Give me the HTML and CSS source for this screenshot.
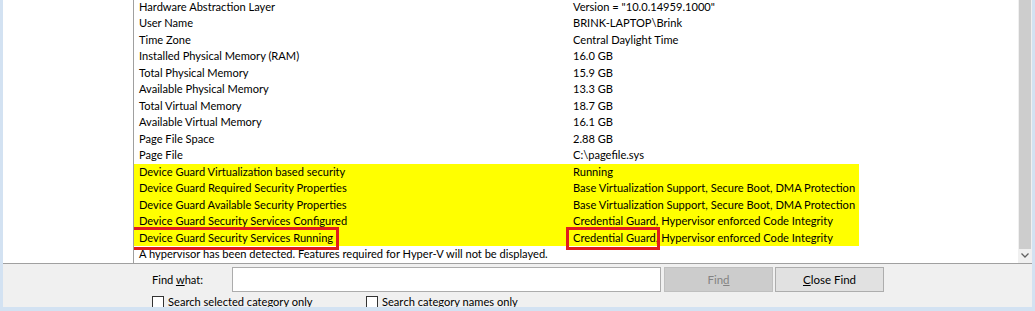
FILE: index.html
```html
<!DOCTYPE html>
<html lang="en">
<head>
    <meta charset="UTF-8">
    <title>System Information</title>
    <link rel="stylesheet" href="styles.css">
</head>
<body>
    <div class="window">
        <div class="panes">
            <div class="tree"></div>
            <div class="list">
                <div class="rows">
                    <div class="row"><span>Hardware Abstraction Layer</span><span>Version = "10.0.14959.1000"</span></div>
                    <div class="row"><span>User Name</span><span>BRINK-LAPTOP\Brink</span></div>
                    <div class="row"><span>Time Zone</span><span>Central Daylight Time</span></div>
                    <div class="row"><span>Installed Physical Memory (RAM)</span><span>16.0 GB</span></div>
                    <div class="row"><span>Total Physical Memory</span><span>15.9 GB</span></div>
                    <div class="row"><span>Available Physical Memory</span><span>13.3 GB</span></div>
                    <div class="row"><span>Total Virtual Memory</span><span>18.7 GB</span></div>
                    <div class="row"><span>Available Virtual Memory</span><span>16.1 GB</span></div>
                    <div class="row"><span>Page File Space</span><span>2.88 GB</span></div>
                    <div class="row"><span>Page File</span><span>C:\pagefile.sys</span></div>
                    <div class="row marked"><span>Device Guard Virtualization based security</span><span>Running</span></div>
                    <div class="row marked"><span>Device Guard Required Security Properties</span><span>Base Virtualization Support, Secure Boot, DMA Protection</span></div>
                    <div class="row marked"><span>Device Guard Available Security Properties</span><span>Base Virtualization Support, Secure Boot, DMA Protection</span></div>
                    <div class="row marked"><span>Device Guard Security Services Configured</span><span>Credential Guard, Hypervisor enforced Code Integrity</span></div>
                    <div class="row marked">
                        <span><span class="boxed boxed-name">Device Guard Security Services Running</span></span>
                        <span><span class="boxed boxed-value">Credential Guard</span>, Hypervisor enforced Code Integrity</span>
                    </div>
                    <div class="row note">A hypervisor has been detected. Features required for Hyper-V will not be displayed.</div>
                </div>
                <div class="scrollbar">
                    <div class="thumb"></div>
                    <div class="arrow">
                        <svg width="8" height="5" viewBox="0 0 8 5"><path d="M0.5 0.5 L4 4 L7.5 0.5" fill="none" stroke="#606060" stroke-width="1.3"/></svg>
                    </div>
                </div>
            </div>
        </div>
        <div class="findbar">
            <div class="find-row">
                <label class="find-label" for="findWhat">Find <u>w</u>hat:</label>
                <input type="text" id="findWhat" class="find-input">
                <button class="btn btn-disabled">Fin<u>d</u></button>
                <button class="btn"><u>C</u>lose Find</button>
            </div>
            <div class="check-row">
                <label class="check"><span class="box"></span><u>S</u>earch selected category only</label>
                <label class="check check-second"><span class="box"></span>Sea<u>r</u>ch category names only</label>
            </div>
        </div>
    </div>
</body>
</html>
```

FILE: styles.css
```css
body {
    margin: 0;
    background-color: #d3e2f2;
    font-family: Lato, "Noto Sans", sans-serif;
    font-size: 11.1px;
    color: #000;
}

.window {
    margin: 0 3px 0 3px;
    height: 307px;
    display: flex;
    flex-direction: column;
    background-color: #f0f0f0;
}

.panes {
    height: 264px;
    display: flex;
    border-bottom: 1px solid #a0a0a0;
    background-color: #fff;
}

.tree {
    width: 130px;
    border-right: 1px solid #a0a0a0;
}

.list {
    flex: 1;
    display: flex;
    overflow: hidden;
}

.rows {
    flex: 1;
    margin-top: -1.5px;
}

.row {
    display: grid;
    grid-template-columns: 434px 291px;
    width: 725px;
    height: 16.5px;
    line-height: 16.5px;
    white-space: nowrap;
}

.row > span {
    padding-left: 5px;
}

.row.marked {
    background-color: #ffff00;
}

.row.note {
    display: block;
    width: auto;
    padding-left: 5px;
}

.boxed {
    position: relative;
    display: inline-block;
}

.boxed::after {
    content: "";
    position: absolute;
    top: -3px;
    bottom: -4px;
    border: 3px solid #e11d1d;
}

.boxed-name::after {
    left: -9px;
    right: -6px;
}

.boxed-value::after {
    left: -7px;
    right: -4px;
}

.scrollbar {
    width: 14px;
    display: flex;
    flex-direction: column;
    background-color: #f0f0f0;
}

.thumb {
    flex: 1;
    margin: 0 1px;
    background-color: #cdcdcd;
}

.arrow {
    height: 14px;
    display: flex;
    align-items: center;
    justify-content: center;
}

.findbar {
    flex: 1;
    padding: 3px 0 0 149px;
}

.find-row {
    display: flex;
    align-items: stretch;
    height: 25px;
}

.find-label {
    width: 80px;
    line-height: 26px;
}

.find-input {
    width: 429px;
    margin: 0 3px 0 0;
    padding: 0;
    border: 1px solid #acacac;
    box-sizing: border-box;
    background: #fff;
}

.btn {
    width: 109px;
    margin-right: 2px;
    padding: 0;
    font-family: inherit;
    font-size: 11.5px;
    color: #000;
    background-color: #e1e1e1;
    border: 1px solid #adadad;
}

.btn-disabled {
    color: #838383;
    background-color: #cccccc;
    border-color: #bfbfbf;
}

.check-row {
    display: flex;
    height: 14px;
    margin-top: 3px;
    line-height: 14px;
}

.check {
    display: flex;
    align-items: center;
    width: 214px;
}

.box {
    width: 10px;
    height: 10px;
    border: 1px solid #333;
    background: #fff;
    margin-right: 4px;
}
```
